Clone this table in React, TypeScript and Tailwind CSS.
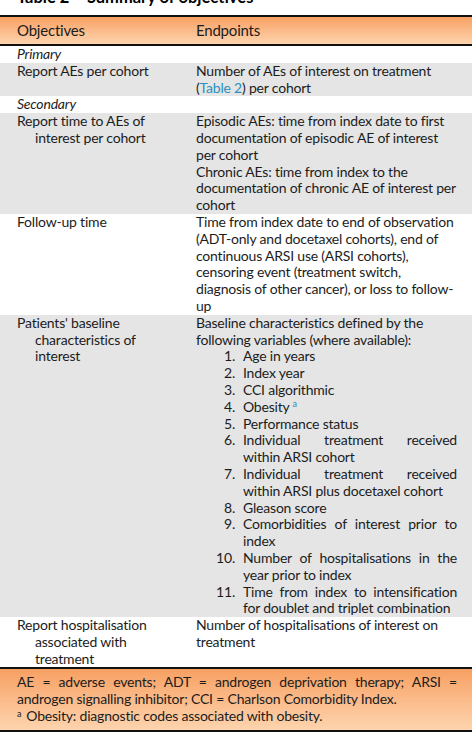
import type { ReactNode } from 'react';

const link = 'text-[#2b8fc0]';

function Row({ left, right, gray }: { left: ReactNode; right?: ReactNode; gray?: boolean }) {
  return (
    <div className={`grid grid-cols-[179px_1fr] ${gray ? 'bg-[#e5e5e5]' : 'bg-white'}`}>
      <div className="pl-[35px] -indent-[18px]">{left}</div>
      <div className="pl-[17px] pr-[15px]">{right}</div>
    </div>
  );
}

// each item split into its printed lines; all but the last are justified
const baseline: string[][] = [
  ['Age in years'],
  ['Index year'],
  ['CCI algorithmic'],
  ['Obesity'],
  ['Performance status'],
  ['Individual treatment received', 'within ARSI cohort'],
  ['Individual treatment received', 'within ARSI plus docetaxel cohort'],
  ['Gleason score'],
  ['Comorbidities of interest prior to', 'index'],
  ['Number of hospitalisations in the', 'year prior to index'],
  ['Time from index to intensification', 'for doublet and triplet combination'],
];

export default function App() {
  return (
    <div className="w-[474px] h-[735px] overflow-hidden bg-white text-[#1c1c1c] font-['Lato','Liberation_Sans',sans-serif] text-[14px] leading-[16.8px] tracking-[-0.2px]">
      {/* Title, cut at the top of the crop */}
      <div className="-mt-[12px] mb-[8px] pl-[17px] font-bold text-[16.5px] leading-[19px] text-black tracking-normal">
        Table 2 – Summary of objectives
      </div>

      <div className="w-[472px]">
        {/* Header */}
        <div className="border-y-2 border-[#111] bg-gradient-to-b from-[#f7a062] to-[#fdd4ae] grid grid-cols-[179px_1fr] h-[31px] items-center text-[15px]">
          <div className="pl-[17px]">Objectives</div>
          <div className="pl-[17px]">Endpoints</div>
        </div>

        <Row left={<i>Primary</i>} />
        <Row
          gray
          left="Report AEs per cohort"
          right={
            <>
              Number of AEs of interest on treatment (<span className={link}>Table 2</span>) per cohort
            </>
          }
        />
        <Row left={<i>Secondary</i>} />
        <Row
          gray
          left="Report time to AEs of interest per cohort"
          right={
            <>
              <p>Episodic AEs: time from index date to first documentation of episodic AE of interest per cohort</p>
              <p>Chronic AEs: time from index to the documentation of chronic AE of interest per cohort</p>
            </>
          }
        />
        <Row
          left="Follow-up time"
          right="Time from index date to end of observation (ADT-only and docetaxel cohorts), end of continuous ARSI use (ARSI cohorts), censoring event (treatment switch, diagnosis of other cancer), or loss to follow-up"
        />
        <Row
          gray
          left="Patients' baseline characteristics of interest"
          right={
            <>
              <p>Baseline characteristics defined by the following variables (where available):</p>
              <ol>
                {baseline.map((lines, i) => (
                  <li key={i} className="grid grid-cols-[47px_1fr]">
                    <span className="text-right pr-[8px]">{i + 1}.</span>
                    <span>
                      {lines.map((line, j) => (
                        <span
                          key={j}
                          className={`block ${j < lines.length - 1 ? 'text-justify [text-align-last:justify]' : ''}`}
                        >
                          {line}
                          {line === 'Obesity' && <sup className={`${link} ml-[3px] text-[9px]`}>a</sup>}
                        </span>
                      ))}
                    </span>
                  </li>
                ))}
              </ol>
            </>
          }
        />
        <Row
          left="Report hospitalisation associated with treatment"
          right="Number of hospitalisations of interest on treatment"
        />

        {/* Footnote */}
        <div className="border-y-2 border-[#111] bg-gradient-to-b from-[#f7a062] to-[#fdd4ae] pl-[17px] pr-[15px] py-[5px]">
          <p className="text-justify">
            AE = adverse events; ADT = androgen deprivation therapy; ARSI = androgen signalling inhibitor; CCI = Charlson Comorbidity Index.
          </p>
          <p>
            <sup className="text-[9px] mr-[5px]">a</sup>Obesity: diagnostic codes associated with obesity.
          </p>
        </div>
      </div>
    </div>
  );
}
